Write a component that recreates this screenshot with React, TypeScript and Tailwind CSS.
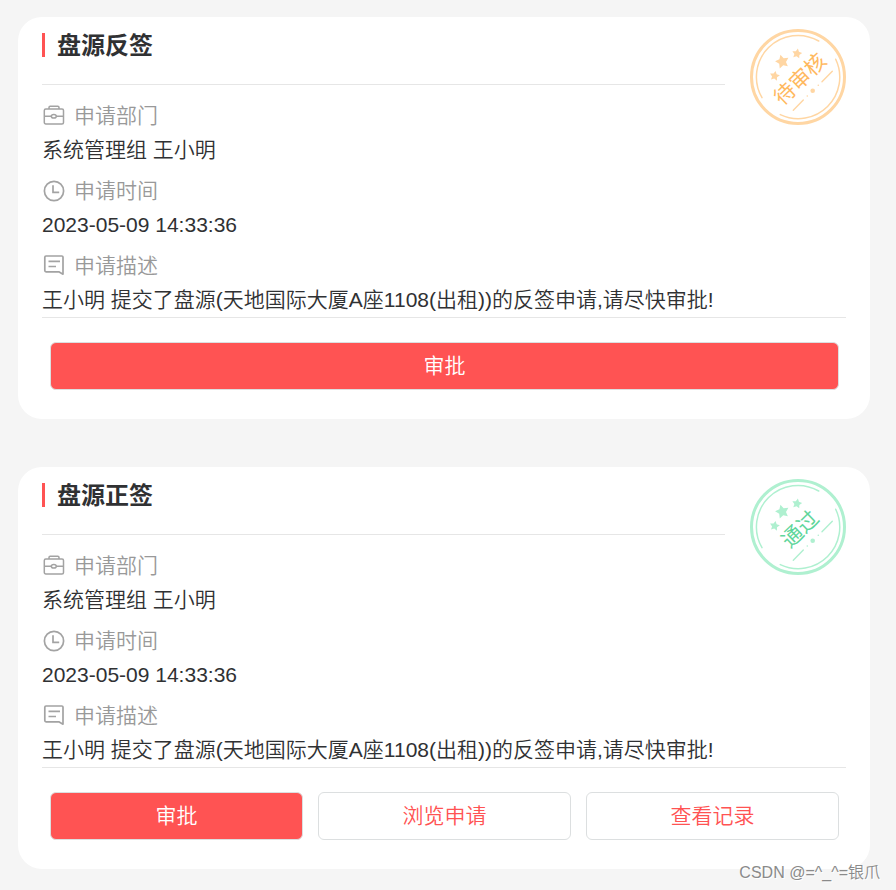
import type { ReactNode } from 'react';

type Status = 'pending' | 'passed';

const records: { id: number; title: string; status: Status; actions: string[] }[] = [
  { id: 1, title: '盘源反签', status: 'pending', actions: ['审批'] },
  { id: 2, title: '盘源正签', status: 'passed', actions: ['审批', '浏览申请', '查看记录'] },
];

const stamps = {
  pending: { text: '待审核', line: '#ffd6a3', ink: '#ffb95f' },
  passed: { text: '通过', line: '#aff0d0', ink: '#5fd69b' },
};

export default function App() {
  return (
    <div className="relative min-h-screen bg-[#f5f5f5] pt-[17px] pr-[26px] pb-[21px] pl-[18px] font-['Liberation_Sans','Noto_Sans_CJK_SC',sans-serif] text-[21px] font-[350] text-[#303133]">
      <main className="flex flex-col gap-12">
        {records.map((record) => (
          <article key={record.id} className="relative rounded-3xl bg-white px-6 pt-4 pb-[29px]">
            <Stamp status={record.status} />

            {/* Title */}
            <header className="mr-[121px] flex h-[52px] items-start gap-3 border-b border-[#e6e6e6]">
              <span className="h-6 w-[3px] bg-[#ff5353]" />
              <h2 className="text-2xl leading-[26px] font-bold">{record.title}</h2>
            </header>

            {/* Details */}
            <dl className="mt-[15px] flex flex-col gap-2 border-b border-[#e6e6e6]">
              <Field icon={<BriefcaseIcon />} label="申请部门">系统管理组 王小明</Field>
              <Field icon={<ClockIcon />} label="申请时间">2023-05-09 14:33:36</Field>
              <Field icon={<NoteIcon />} label="申请描述">
                王小明 提交了盘源(天地国际大厦A座1108(出租))的反签申请,请尽快审批!
              </Field>
            </dl>

            {/* Actions */}
            <div className="mt-6 mr-[7px] ml-2 flex gap-[15px]">
              {record.actions.map((action, index) => (
                <button
                  key={action}
                  type="button"
                  className={
                    index === 0
                      ? 'h-12 flex-1 rounded-md border border-[#dcdfe0] bg-[#ff5353] text-white'
                      : 'h-12 flex-1 rounded-md border border-[#dcdfe0] bg-white text-[#ff5353]'
                  }
                >
                  {action}
                </button>
              ))}
            </div>
          </article>
        ))}
      </main>

      <p className="absolute right-4 bottom-1 text-base leading-[26px] text-[#8a8a8a] [text-shadow:1px_1px_0_white]">
        CSDN @=^_^=银爪
      </p>
    </div>
  );
}

function Field({ icon, label, children }: { icon: ReactNode; label: string; children: ReactNode }) {
  return (
    <div>
      <dt className="flex items-center gap-2 leading-8 text-[#999999]">
        {icon}
        {label}
      </dt>
      <dd className="leading-[35px]">{children}</dd>
    </div>
  );
}

const starPath =
  'M0 -7.2 L2.2 -3 L6.9 -2.2 L3.5 1.2 L4.2 5.8 L0 3.7 L-4.2 5.8 L-3.5 1.2 L-6.9 -2.2 L-2.2 -3 Z';

function Stamp({ status }: { status: Status }) {
  const { text, line, ink } = stamps[status];

  return (
    <svg
      className="absolute top-3 right-6 size-24"
      viewBox="0 0 96 96"
      fill="none"
      stroke={line}
      role="img"
      aria-label={text}
    >
      <circle cx="48" cy="48" r="46.5" strokeWidth="3" />
      <path
        d="M12 68.7A41.5 41.5 0 0 1 68.7 12M85.7 30.3A41.5 41.5 0 0 1 30.3 85.6"
        strokeWidth="1.5"
        strokeLinecap="round"
      />
      <path d="M43.3 81.3L53.3 71M72 52.7L82.3 42.3" strokeWidth="1.4" strokeLinecap="round" />
      <g fill={line} stroke="none">
        <path d={starPath} transform="translate(32.3 32.7) rotate(-15)" />
        <path d={starPath} transform="translate(47 24.7) rotate(10) scale(.72)" />
        <path d={starPath} transform="translate(24.7 47) rotate(10) scale(.72)" />
        <circle cx="62.7" cy="61.8" r="2.3" />
        <circle cx="57.3" cy="67" r=".8" />
        <circle cx="68.3" cy="56.3" r=".8" />
      </g>
      <text
        x="50"
        y="50"
        transform="rotate(-44 50 50)"
        textAnchor="middle"
        dominantBaseline="central"
        fill={ink}
        stroke="none"
        className="text-[21px] font-normal"
      >
        {text}
      </text>
    </svg>
  );
}

function BriefcaseIcon() {
  return (
    <svg className="size-6" viewBox="0 0 24 24" fill="none" stroke="#a3a3a3" strokeWidth="1.5" strokeLinejoin="round">
      <rect x="2.3" y="4.9" width="19.2" height="15" rx="1.5" />
      <path d="M7 4.9V3.4a1.2 1.2 0 0 1 1.2-1.2h7.6A1.2 1.2 0 0 1 17 3.4v1.5" />
      <path d="M2.3 12.3h7M14.3 12.3h7.2" />
      <ellipse cx="11.8" cy="12.3" rx="2.5" ry="1.8" />
    </svg>
  );
}

function ClockIcon() {
  return (
    <svg className="size-6" viewBox="0 0 24 24" fill="none" stroke="#a3a3a3" strokeWidth="1.7">
      <circle cx="12" cy="12" r="9.6" />
      <path d="M11 6.3v7h6.2" />
    </svg>
  );
}

function NoteIcon() {
  return (
    <svg className="size-6" viewBox="0 0 24 24" fill="none" stroke="#a3a3a3" strokeWidth="1.7" strokeLinejoin="round">
      <path d="M21 20.2V3.2A1.2 1.2 0 0 0 19.8 2H4a1.2 1.2 0 0 0-1.2 1.2v13.4A1.2 1.2 0 0 0 4 17.8h12.8z" />
      <path d="M6.5 7.3H18M6.5 12.5H14" />
    </svg>
  );
}
